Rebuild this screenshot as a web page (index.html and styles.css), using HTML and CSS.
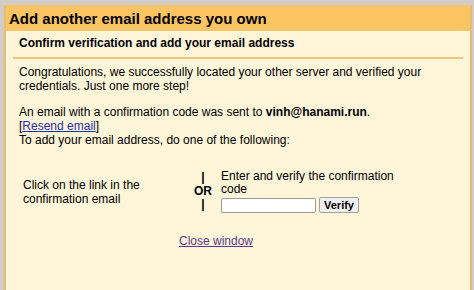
FILE: index.html
```html
<!DOCTYPE html>
<html lang="en">
<head>
    <meta charset="UTF-8">
    <title>Add another email address you own</title>
<link rel="stylesheet" href="styles.css">
</head>
<body>
    <div class="dialog">
        <div class="dialog-title">Add another email address you own</div>
        <div class="dialog-body">
            <div class="section-title">Confirm verification and add your email address</div>
            <p class="intro">Congratulations, we successfully located your other server and verified your credentials. Just one more step!</p>
            <p class="sent">
                An email with a confirmation code was sent to <b>vinh@hanami.run</b>.<br>
                [<a href="#" class="resend">Resend email</a>]<br>
                To add your email address, do one of the following:
            </p>
            <div class="choices">
                <div class="choice-link">Click on the link in the confirmation email</div>
                <div class="or-col">
                    <span>|</span>
                    <span>OR</span>
                    <span>|</span>
                </div>
                <div class="choice-code">
                    <div>Enter and verify the confirmation code</div>
                    <div class="code-row">
                        <input type="text" class="code-input">
                        <button class="verify-btn">Verify</button>
                    </div>
                </div>
            </div>
            <div class="close-row"><a href="#" class="close-link">Close window</a></div>
        </div>
    </div>
</body>
</html>
```

FILE: styles.css
```css
body {
    margin: 0;
    background-color: #d3cbc8;
    font-family: "Liberation Sans", Arial, sans-serif;
    font-size: 12px;
    color: #000;
    height: 290px;
    overflow: hidden;
}

.dialog {
    margin: 5px 0 0 4px;
    width: 464px;
    height: 290px;
    border-left: 2px solid #e2bd74;
    border-right: 2px solid #e2bd74;
    background-color: #fff5d9;
}

.dialog-title {
    background-color: #fdc464;
    height: 26px;
    line-height: 27px;
    padding-left: 3px;
    font-size: 15px;
    font-weight: bold;
}

.dialog-body {
    padding: 0 7px;
}

.section-title {
    font-weight: bold;
    padding: 5px 6px 7px;
    line-height: 14px;
    border-bottom: 2px solid #f5c77a;
}

.intro, .sent {
    margin: 6px 6px 0;
    line-height: 14px;
}

.sent {
    margin-top: 12px;
}

a.resend {
    color: #1f2fa8;
}

.choices {
    display: flex;
    align-items: center;
    margin-top: 23px;
    line-height: 14px;
}

.choice-link {
    width: 150px;
    padding-left: 10px;
    margin-right: 20px;
}

.or-col {
    display: flex;
    flex-direction: column;
    align-items: center;
    width: 20px;
    line-height: 13.5px;
    font-weight: bold;
}

.choice-code {
    width: 190px;
    margin-left: 8px;
    line-height: 13px;
}

.code-row {
    display: flex;
    align-items: center;
    margin-top: 1px;
}

.code-input {
    box-sizing: border-box;
    width: 95px;
    height: 15px;
    border: 1px solid #9a9a9a;
    border-radius: 2px;
    margin: 0 3px 0 0;
}

.verify-btn {
    font-family: "Liberation Sans", Arial, sans-serif;
    font-size: 11px;
    font-weight: bold;
    line-height: 12px;
    padding: 1px 4px;
    background-color: #f0f0f0;
    border: 1px solid #a0a0a0;
    border-radius: 2px;
}

.close-row {
    margin-top: 21px;
    padding-left: 166px;
}

a.close-link {
    color: #5b3a8e;
}
```
